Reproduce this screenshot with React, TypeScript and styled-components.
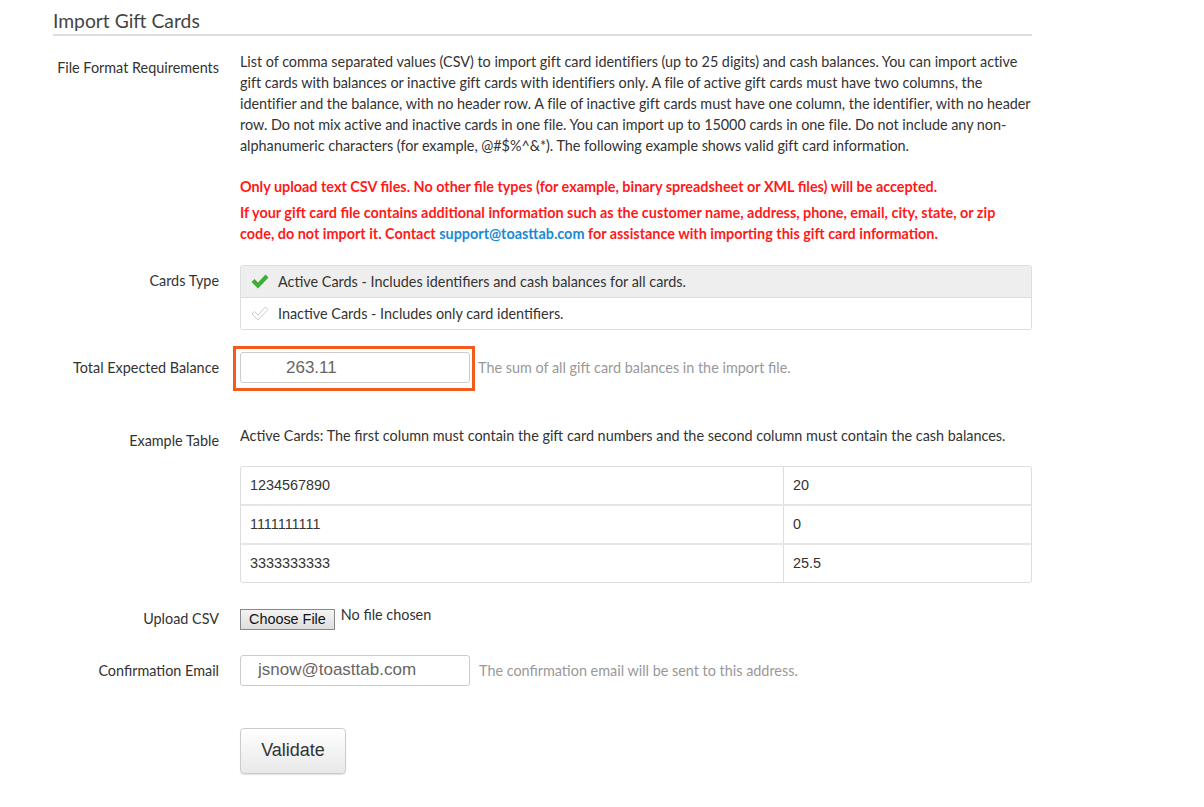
import React from "react";
import styled, { createGlobalStyle } from "styled-components";

const GlobalStyle = createGlobalStyle`
  body {
    margin: 0;
    background: #fff;
    font-family: Lato, "Open Sans", sans-serif;
    color: #333;
  }
`;

const Page = styled.div`
  width: 979px;
  padding: 9px 0 40px 53px;
`;

const Title = styled.h2`
  margin: 0;
  font-size: 19.3px;
  font-weight: 400;
  line-height: 24px;
  color: #444;
  padding-bottom: 1px;
  border-bottom: 2px solid #ddd;
`;

const Row = styled.div<{ $top: number; $center?: boolean }>`
  display: flex;
  align-items: ${(p) => (p.$center ? "center" : "flex-start")};
  gap: 21px;
  margin-top: ${(p) => p.$top}px;
`;

const Label = styled.div<{ $pad?: number }>`
  flex: 0 0 166px;
  text-align: right;
  font-size: 14.4px;
  line-height: 21px;
  padding-top: ${(p) => (p.$pad ?? 5)}px;
  color: #333;
  white-space: nowrap;
`;

const Content = styled.div`
  flex: 1;
  min-width: 0;
  font-size: 14.4px;
  line-height: 21px;
`;

const Text = styled.p<{ $tight?: boolean }>`
  margin: 0;
  letter-spacing: ${(p) => (p.$tight ? "-0.03px" : "normal")};
`;

const Warning = styled.p<{ $top: number }>`
  margin: ${(p) => p.$top}px 0 0;
  color: #ff1a1a;
  font-weight: 700;
`;

const Link = styled.a`
  color: #1a8ad4;
  text-decoration: none;
`;

const OptionList = styled.div`
  border: 1px solid #ddd;
  border-radius: 3px;
  overflow: hidden;
`;

const Option = styled.div<{ $active?: boolean }>`
  display: flex;
  align-items: center;
  gap: 9px;
  height: 31px;
  padding: 0 10px;
  background: ${(p) => (p.$active ? "#eee" : "#fff")};
  & + & {
    border-top: 1px solid #ddd;
  }
`;

const Highlight = styled.div`
  display: inline-flex;
  margin: -6px 0 -8px -7px;
  padding: 3px 2px 5px 4px;
  border: 3px solid #f45a1a;
`;

const FieldLine = styled.div<{ $gap: number }>`
  display: flex;
  align-items: center;
  gap: ${(p) => p.$gap}px;
`;

const Input = styled.input<{ $indent: number }>`
  box-sizing: border-box;
  width: 230px;
  height: 31px;
  border: 1px solid #ccc;
  border-radius: 3px;
  padding: 0 0 0 ${(p) => p.$indent}px;
  font-family: "Liberation Sans", Arial, sans-serif;
  font-size: 17px;
  color: #666;
  background: #fff;
  outline: none;
`;

const Hint = styled.span`
  font-size: 14.4px;
  color: #999;
`;

const Table = styled.div`
  margin-top: 20px;
  border: 1px solid #ddd;
  border-radius: 3px;
  overflow: hidden;
`;

const TableRow = styled.div`
  display: grid;
  grid-template-columns: 542px 1fr;
  height: 37px;
  & + & {
    border-top: 2px solid #e6e6e6;
  }
`;

const Cell = styled.div`
  display: flex;
  align-items: center;
  padding: 0 9px;
  font-family: "Liberation Sans", Arial, sans-serif;
  font-size: 14.4px;
  color: #333;
  & + & {
    border-left: 1px solid #ddd;
  }
`;

const FileButton = styled.button`
  height: 21px;
  padding: 0 8px;
  border: 1px solid #888;
  border-radius: 0;
  background: linear-gradient(#f4f4f4, #dedede);
  font-family: "Liberation Sans", Arial, sans-serif;
  font-size: 14.4px;
  color: #111;
`;

const FileStatus = styled.span`
  font-size: 14.4px;
  margin-left: 6px;
  position: relative;
  top: -4px;
`;

const ValidateButton = styled.button`
  width: 106px;
  height: 46px;
  border: 1px solid #ccc;
  border-radius: 4px;
  background: linear-gradient(#fff, #e8e8e8);
  box-shadow: 0 1px 1px rgba(0, 0, 0, 0.12);
  font-family: "Liberation Sans", Arial, sans-serif;
  font-size: 18px;
  color: #333;
`;

const Check: React.FC<{ active?: boolean }> = ({ active }) => (
  <svg width="18" height="15" viewBox="0 0 18 15">
    {active ? (
      <path d="M0.5 8 L3.5 5 L7 8.5 L14.5 0.5 L17.5 3.5 L7 14.5 Z" fill="#3cb034" />
    ) : (
      <path
        d="M1 8 L3.5 5.5 L7 9 L14.5 1 L17 3.5 L7 14 Z"
        fill="none"
        stroke="#ccc"
        strokeWidth="1"
      />
    )}
  </svg>
);

const rows = [
  ["1234567890", "20"],
  ["1111111111", "0"],
  ["3333333333", "25.5"],
];

export default function App() {
  return (
    <Page>
      <GlobalStyle />
      <Title>Import Gift Cards</Title>

      <Row $top={15}>
        <Label $pad={6}>File Format Requirements</Label>
        <Content>
          <Text $tight>
            List of comma separated values (CSV) to import gift card identifiers (up to 25 digits)
            and cash balances. You can import active gift cards with balances or inactive gift cards
            with identifiers only. A file of active gift cards must have two columns, the identifier
            and the balance, with no header row. A file of inactive gift cards must have one column,
            the identifier, with no header row. Do not mix active and inactive cards in one file.
            You can import up to 15000 cards in one file. Do not include any non-alphanumeric
            characters (for example, @#$%^&amp;*). The following example shows valid gift card
            information.
          </Text>
          <Warning $top={20}>
            Only upload text CSV files. No other file types (for example, binary spreadsheet or XML
            files) will be accepted.
          </Warning>
          <Warning $top={5}>
            If your gift card file contains additional information such as the customer name,
            address, phone, email, city, state, or zip code, do not import it. Contact{" "}
            <Link href="#">support@toasttab.com</Link> for assistance with importing this gift card
            information.
          </Warning>
        </Content>
      </Row>

      <Row $top={21}>
        <Label>Cards Type</Label>
        <Content>
          <OptionList>
            <Option $active>
              <Check active />
              Active Cards - Includes identifiers and cash balances for all cards.
            </Option>
            <Option>
              <Check />
              Inactive Cards - Includes only card identifiers.
            </Option>
          </OptionList>
        </Content>
      </Row>

      <Row $top={22}>
        <Label>Total Expected Balance</Label>
        <Content>
          <FieldLine $gap={3}>
            <Highlight>
              <Input $indent={45} defaultValue="263.11" />
            </Highlight>
            <Hint>The sum of all gift card balances in the import file.</Hint>
          </FieldLine>
        </Content>
      </Row>

      <Row $top={42}>
        <Label>Example Table</Label>
        <Content>
          <Text>
            Active Cards: The first column must contain the gift card numbers and the second column
            must contain the cash balances.
          </Text>
          <Table>
            {rows.map(([id, bal]) => (
              <TableRow key={id}>
                <Cell>{id}</Cell>
                <Cell>{bal}</Cell>
              </TableRow>
            ))}
          </Table>
        </Content>
      </Row>

      <Row $top={25} $center>
        <Label $pad={0}>Upload CSV</Label>
        <Content>
          <FileButton>Choose File</FileButton>
          <FileStatus>No file chosen</FileStatus>
        </Content>
      </Row>

      <Row $top={25}>
        <Label>Confirmation Email</Label>
        <Content>
          <FieldLine $gap={9}>
            <Input $indent={17} defaultValue="jsnow@toasttab.com" />
            <Hint>The confirmation email will be sent to this address.</Hint>
          </FieldLine>
        </Content>
      </Row>

      <Row $top={42}>
        <Label />
        <Content>
          <ValidateButton>Validate</ValidateButton>
        </Content>
      </Row>
    </Page>
  );
}
